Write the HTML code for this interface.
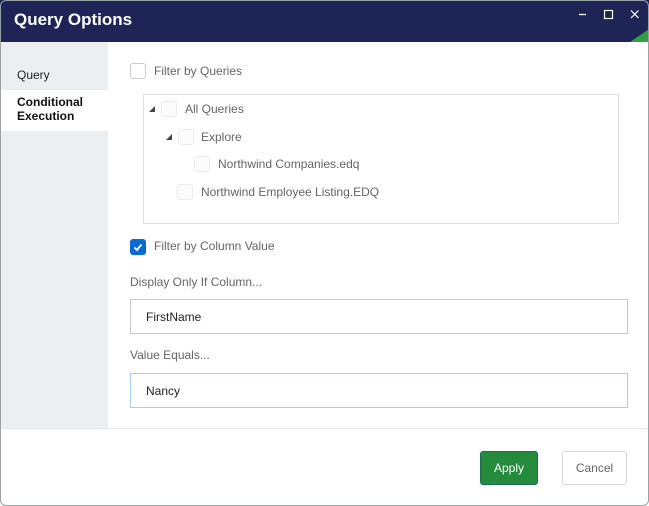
<!DOCTYPE html>
<html><head><meta charset="utf-8"><style>
*{box-sizing:border-box;margin:0;padding:0}
body{width:649px;height:506px;background:#fff;font-family:"Liberation Sans",sans-serif;position:relative;overflow:hidden}
.win{position:absolute;left:0;top:0;width:649px;height:506px;overflow:hidden;background:#fff}
.frame{position:absolute;left:0;top:0;width:649px;height:506px;border:1px solid #9aa0a8;border-radius:6px;pointer-events:none}
.title{position:absolute;left:0;top:0;width:100%;height:42px;background:#1f2456}
.title span{position:absolute;left:14px;top:10px;color:#fff;font-size:17px;font-weight:bold}
.side{position:absolute;left:0;top:42px;width:108px;height:386px;background:#eceff2}
.side .a{position:absolute;left:17px;top:26px;font-size:12px;color:#222}
.side .b{position:absolute;left:0;top:48px;width:108px;height:41px;background:#fff;padding:5px 0 0 17px;font-size:12px;font-weight:bold;color:#111;line-height:14px}
.t{position:absolute;font-size:12px;color:#666}
.cb{position:absolute;width:16px;height:16px;border:1px solid #ccc;border-radius:3px;background:#fff}
.cbl{position:absolute;width:16px;height:16px;border:1px solid #ebebeb;border-radius:3px;background:#fcfcfc}
.tree{position:absolute;left:143px;top:94px;width:476px;height:130px;border:1px solid #e0e0e0}
.arr{position:absolute;width:0;height:0;border-left:6px solid transparent;border-bottom:6px solid #444}
.inp{position:absolute;left:130px;width:498px;height:35px;border:1px solid #c8c8c8;font-size:12px;color:#222;padding:10px 0 0 15px}
.foot{position:absolute;left:0;top:428px;width:100%;height:1px;background:#e3e6ea}
.btn{position:absolute;top:451px;height:34px;border-radius:3px;font-size:12px;text-align:center;line-height:32px}
</style></head><body><div class="win">
<div class="title"><span>Query Options</span>
<svg style="position:absolute;left:0;top:0" width="649" height="42">
<path d="M579 14.5h7" stroke="#fff" stroke-width="1.3"/>
<rect x="604.5" y="10.5" width="8" height="8" stroke="#fff" stroke-width="1.2" fill="none"/>
<path d="M631 10.5l7.5 7.5M638.5 10.5l-7.5 7.5" stroke="#fff" stroke-width="1.2"/>
<path d="M630 42L649 29V42Z" fill="#2ea043"/>
</svg></div>
<div class="side"><div class="a">Query</div><div class="b">Conditional<br>Execution</div></div>
<div class="cb" style="left:130px;top:63px"></div><div class="t" style="left:154px;top:64px">Filter by Queries</div>
<div class="tree"></div>
<div class="arr" style="left:149px;top:106px"></div><div class="cbl" style="left:161px;top:101px"></div><div class="t" style="left:185px;top:102px">All Queries</div>
<div class="arr" style="left:166px;top:134px"></div><div class="cbl" style="left:178px;top:129px"></div><div class="t" style="left:201px;top:130px">Explore</div>
<div class="cbl" style="left:194px;top:156px"></div><div class="t" style="left:218px;top:157px">Northwind Companies.edq</div>
<div class="cbl" style="left:177px;top:184px"></div><div class="t" style="left:201px;top:185px">Northwind Employee Listing.EDQ</div>
<div style="position:absolute;left:130px;top:239px;width:16px;height:16px;background:#0a6cd1;border-radius:3px"><svg width="16" height="16"><path d="M4.5 8.5l2.5 2.5 4.5-5.5" stroke="#fff" stroke-width="1.8" fill="none"/></svg></div>
<div class="t" style="left:154px;top:239px">Filter by Column Value</div>
<div class="t" style="left:130px;top:275px">Display Only If Column...</div>
<div class="inp" style="top:299px">FirstName</div>
<div class="t" style="left:130px;top:348px">Value Equals...</div>
<div class="inp" style="top:373px;border-color:#a9cdf0">Nancy</div>
<div class="foot"></div>
<div class="btn" style="left:480px;width:58px;background:#248a3c;border:1px solid #1d6e50;color:#fff">Apply</div>
<div class="btn" style="left:562px;width:65px;background:#fff;border:1px solid #d5d8dc;color:#666">Cancel</div>
</div><div class="frame"></div></body></html>
